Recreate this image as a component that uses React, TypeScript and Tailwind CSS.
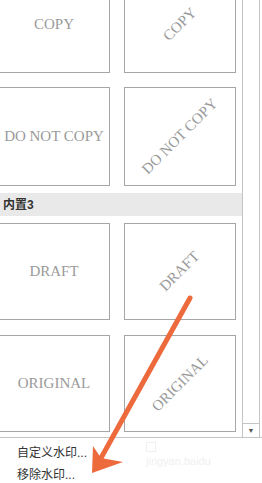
import React from "react";

type Mark = { label: string; diagonal?: boolean };

const Card: React.FC<Mark & { h: string }> = ({ label, diagonal, h }) => (
  <div className={`${h} border border-[#a6a6a6] bg-white flex items-center justify-center overflow-hidden`}>
    <span
      className={`whitespace-nowrap text-[15px] leading-none text-[#9a9a9a] font-['Liberation_Serif','DejaVu_Serif',serif] ${diagonal ? "-rotate-45" : ""}`}
    >
      {label}
    </span>
  </div>
);

const App: React.FC = () => {
  return (
    <div className="relative w-[262px] h-[483px] overflow-hidden bg-white font-['Liberation_Sans','Noto_Sans_CJK_SC',sans-serif]">
      {/* GALLERY + SCROLLBAR */}
      <div className="flex h-[437px]">
        <div className="w-[243px] overflow-hidden border-r border-[#c4c4c4]">
          <div className="-mt-[24px]">
            <div className="-ml-[2px] grid grid-cols-[112px_112px] gap-x-[14px] gap-y-[14px]">
              <Card h="h-[97px]" label="COPY" />
              <Card h="h-[97px]" label="COPY" diagonal />
              <Card h="h-[99px]" label="DO NOT COPY" />
              <Card h="h-[99px]" label="DO NOT COPY" diagonal />
            </div>

            <div className="mt-[7px] h-[23px] bg-[#e9e9e9] flex items-center pl-[3px]">
              <span className="text-[12px] font-bold text-[#333]">内置3</span>
            </div>

            <div className="mt-[7px] -ml-[2px] grid grid-cols-[112px_112px] gap-x-[14px] gap-y-[15px]">
              <Card h="h-[97px]" label="DRAFT" />
              <Card h="h-[97px]" label="DRAFT" diagonal />
              <Card h="h-[97px]" label="ORIGINAL" />
              <Card h="h-[97px]" label="ORIGINAL" diagonal />
            </div>
          </div>
        </div>

        <div className="w-[17px] border-r border-[#c4c4c4] bg-white flex flex-col justify-end">
          <div className="h-[14px] border-t border-[#c4c4c4] flex items-center justify-center">
            <span className="text-[7px] leading-none text-[#555]">▼</span>
          </div>
        </div>
      </div>

      {/* MENU */}
      <div className="border-t border-[#c4c4c4] pl-[17px] pt-[4px] text-[12px] text-[#333] leading-[22px]">
        <div>自定义水印...</div>
        <div>移除水印...</div>
      </div>

      {/* blurred site mark */}
      <div className="absolute left-[146px] top-[442px] text-[11px] text-[#f0f0f0] leading-none">
        <div className="border border-[#f0f0f0] w-[10px] h-[10px] mb-[4px]" />
        <div>jingyan.baidu</div>
      </div>

      {/* ARROW */}
      <svg className="absolute inset-0 pointer-events-none" width="262" height="483">
        <line x1="190" y1="298" x2="101" y2="458" stroke="#ec6a3c" strokeWidth="5" strokeLinecap="round" />
        <polygon points="92,473 93,446 101,458 123,462" fill="#ec6a3c" />
      </svg>
    </div>
  );
};

export default App;
